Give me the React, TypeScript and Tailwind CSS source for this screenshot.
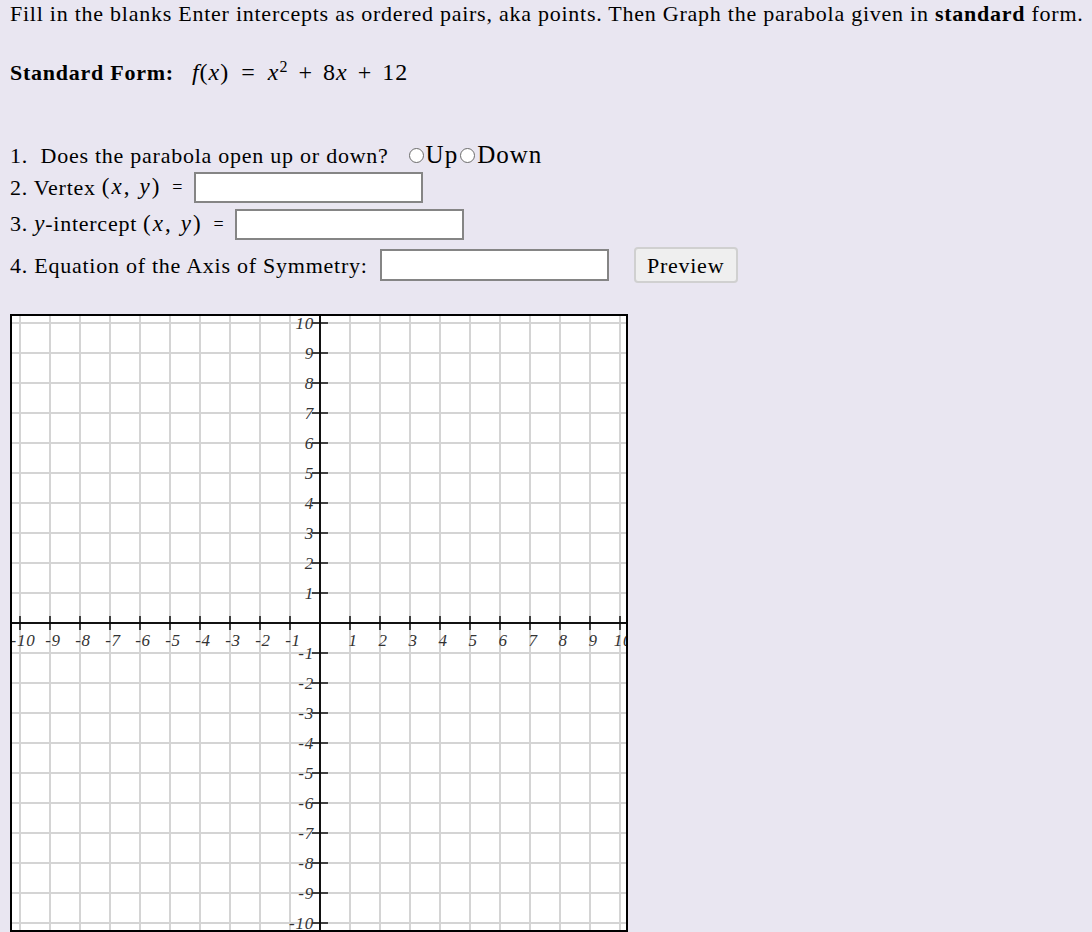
import React from "react";

const ticks = Array.from({ length: 21 }, (_, i) => i - 10);
const X = (k: number) => 310 + 30 * k;
const Y = (k: number) => 309 - 30 * k;

function Pair() {
  return (
    <span className="whitespace-nowrap text-[23px] tracking-[2px]">
      (<i>x</i>,<i className="ml-[8px]">y</i>)
    </span>
  );
}

function Radio({ label }: { label: string }) {
  return (
    <label className="flex items-center">
      <span className="mr-[2px] inline-block h-[15px] w-[15px] rounded-full border-[1.5px] border-[#6b6b6b] bg-white" />
      <span className="text-[25px] tracking-[1px]">{label}</span>
    </label>
  );
}

function Graph() {
  return (
    <div className="mt-[31px] h-[618px] w-[618px]">
      <svg width={618} height={618} className="block bg-white">
        {ticks.map((k) => (
          <line key={"v" + k} x1={X(k)} x2={X(k)} y1={0} y2={618} stroke="#d4d4d4" strokeWidth={2} />
        ))}
        {ticks.map((k) => (
          <line key={"h" + k} x1={0} x2={618} y1={Y(k)} y2={Y(k)} stroke="#d4d4d4" strokeWidth={2} />
        ))}
        <line x1={0} x2={618} y1={Y(0)} y2={Y(0)} stroke="#111" strokeWidth={2} />
        <line x1={X(0)} x2={X(0)} y1={0} y2={618} stroke="#111" strokeWidth={2} />
        {ticks
          .filter((k) => k !== 0)
          .map((k) => (
            <g key={"t" + k}>
              <line x1={X(k)} x2={X(k)} y1={Y(0) - 7} y2={Y(0) + 7} stroke="#111" strokeWidth={1.5} />
              <line x1={X(0) - 8} x2={X(0) + 8} y1={Y(k)} y2={Y(k)} stroke="#111" strokeWidth={1.5} />
              <text
                x={X(k) + 3}
                y={Y(0) + 23}
                textAnchor="middle"
                fontSize={17}
                fontStyle="italic"
                fill="#333"
                fontFamily='"Liberation Serif", serif'
              >
                {k}
              </text>
              <text
                x={X(0) - 6}
                y={Y(k) + 6}
                textAnchor="end"
                fontSize={17}
                fontStyle="italic"
                fill="#333"
                fontFamily='"Liberation Serif", serif'
              >
                {k}
              </text>
            </g>
          ))}
        <rect x={1} y={1} width={616} height={616} fill="none" stroke="#000" strokeWidth={2} />
      </svg>
    </div>
  );
}

export default function App() {
  return (
    <div className="min-h-screen bg-[#e9e6f1] pl-[10px] font-['Liberation_Serif',serif] text-[22px] tracking-[0.75px] text-black">
      <div className="h-[28px] whitespace-nowrap leading-[28px]">
        Fill in the blanks Enter intercepts as ordered pairs, aka points. Then Graph the parabola given in{" "}
        <b>standard</b> form.
      </div>

      <div className="mt-[30px] flex h-[28px] items-center whitespace-nowrap">
        <b>Standard Form:</b>
        <span className="ml-[18px] flex items-baseline text-[24px] tracking-[1px]">
          <i>f</i>(<i>x</i>)<span className="mx-[12px]">=</span>
          <i>x</i>
          <sup className="text-[16px]">2</sup>
          <span className="mx-[10px]">+</span>8<i>x</i>
          <span className="mx-[10px]">+</span>12
        </span>
      </div>

      <div className="mt-[55px] flex h-[28px] items-center whitespace-nowrap">
        <span className="mr-[20px]">1.&nbsp; Does the parabola open up or down?</span>
        <Radio label="Up" />
        <span className="ml-[2px]">
          <Radio label="Down" />
        </span>
      </div>

      <div className="mt-[1px] flex h-[34px] items-center whitespace-nowrap">
        <span className="mr-[6px]">2. Vertex</span>
        <Pair />
        <span className="mx-[11px] text-[18px]">=</span>
        <input className="h-[31px] w-[229px] border-2 border-[#858585] bg-white outline-none" />
      </div>

      <div className="mt-[3px] flex h-[35px] items-center whitespace-nowrap">
        <span className="mr-[6px]">
          3. <i className="text-[23px]">y</i>-intercept
        </span>
        <Pair />
        <span className="mx-[11px] text-[18px]">=</span>
        <input className="h-[31px] w-[229px] border-2 border-[#858585] bg-white outline-none" />
      </div>

      <div className="mt-[5px] flex h-[36px] items-center whitespace-nowrap">
        <span className="mr-[12px]">4. Equation of the Axis of Symmetry:</span>
        <input className="h-[32px] w-[229px] border-2 border-[#858585] bg-white outline-none" />
        <button className="ml-[25px] h-[36px] w-[104px] rounded-[4px] border-2 border-[#d0d0d0] bg-[#efefef] text-[22px]">
          Preview
        </button>
      </div>

      <Graph />
    </div>
  );
}
